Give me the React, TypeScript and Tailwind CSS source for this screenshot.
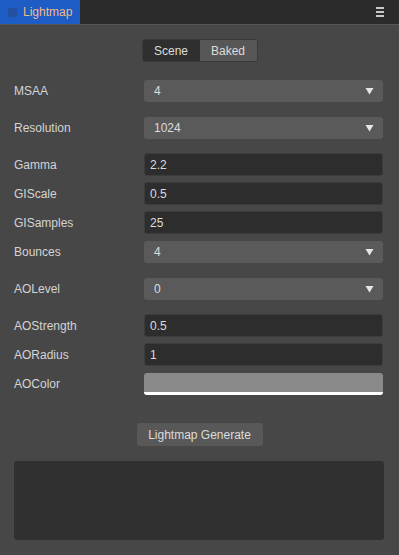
import React, { useState } from 'react';

type Row =
  | { label: string; kind: 'select'; value: string; mt: string }
  | { label: string; kind: 'input'; value: string; mt: string }
  | { label: string; kind: 'color'; value: string; mt: string };

const rows: Row[] = [
  { label: 'MSAA', kind: 'select', value: '4', mt: 'mt-[18px]' },
  { label: 'Resolution', kind: 'select', value: '1024', mt: 'mt-[15px]' },
  { label: 'Gamma', kind: 'input', value: '2.2', mt: 'mt-[14px]' },
  { label: 'GIScale', kind: 'input', value: '0.5', mt: 'mt-[6px]' },
  { label: 'GISamples', kind: 'input', value: '25', mt: 'mt-[6px]' },
  { label: 'Bounces', kind: 'select', value: '4', mt: 'mt-[7px]' },
  { label: 'AOLevel', kind: 'select', value: '0', mt: 'mt-[15px]' },
  { label: 'AOStrength', kind: 'input', value: '0.5', mt: 'mt-[14px]' },
  { label: 'AORadius', kind: 'input', value: '1', mt: 'mt-[6px]' },
  { label: 'AOColor', kind: 'color', value: '#8a8a8a', mt: 'mt-[7px]' },
];

const Arrow = () => (
  <svg width="9" height="8" viewBox="0 0 9 8" className="shrink-0">
    <path d="M0.5 1 L8.5 1 L4.5 7.5 Z" fill="#e6e6e6" />
  </svg>
);

const Field: React.FC<{ row: Row }> = ({ row }) => {
  if (row.kind === 'select') {
    return (
      <div className="flex h-[22px] w-[239px] items-center justify-between rounded-[3px] bg-[#5a5a5a] pl-[10px] pr-[9px] text-[12px] text-[#dcdcdc]">
        <span>{row.value}</span>
        <Arrow />
      </div>
    );
  }
  if (row.kind === 'input') {
    return (
      <div className="flex h-[23px] w-[239px] items-center rounded-[3px] border border-[#3c3c3c] bg-[#2d2d2d] pl-[5px] text-[12px] text-[#dcdcdc]">
        {row.value}
      </div>
    );
  }
  return (
    <div className="flex h-[22px] w-[239px] flex-col overflow-hidden rounded-[3px] bg-[#8a8a8a]">
      <div className="flex-1" />
      <div className="h-[3px] bg-white" />
    </div>
  );
};

export default function App() {
  const [mode, setMode] = useState<'scene' | 'baked'>('scene');

  return (
    <div
      className="flex h-[555px] w-[399px] flex-col bg-[#474747]"
      style={{ fontFamily: '"Liberation Sans", Arial, sans-serif' }}
    >
      {/* Header */}
      <div className="flex h-[25px] shrink-0 items-stretch justify-between border-b border-[#585858] bg-[#2b2b2b]">
        <div className="flex w-[80px] items-center gap-[6px] bg-[#1c5cc4] pl-[8px]">
          <div className="h-[9px] w-[9px] rounded-[2px] bg-[#2350a0]" />
          <span className="text-[12px] text-[#f2b88a]">Lightmap</span>
        </div>
        <div className="flex items-center pr-[15px]">
          <div className="flex w-[8px] flex-col gap-[2px]">
            <div className="h-[2px] bg-[#c8c8c8]" />
            <div className="h-[2px] bg-[#c8c8c8]" />
            <div className="h-[2px] bg-[#c8c8c8]" />
          </div>
        </div>
      </div>

      {/* Scene / Baked toggle */}
      <div className="mt-[14px] flex justify-center">
        <div className="flex h-[23px] overflow-hidden rounded-[3px] border border-[#3a3a3a] text-[12px]">
          <button
            onClick={() => setMode('scene')}
            className={`w-[57px] ${mode === 'scene' ? 'bg-[#2f2f2f]' : 'bg-[#575757]'} text-[#dcdcdc]`}
          >
            Scene
          </button>
          <button
            onClick={() => setMode('baked')}
            className={`w-[57px] ${mode === 'baked' ? 'bg-[#2f2f2f]' : 'bg-[#575757]'} text-[#dcdcdc]`}
          >
            Baked
          </button>
        </div>
      </div>

      {/* Property rows */}
      <div className="flex flex-col">
        {rows.map((row) => (
          <div key={row.label} className={`flex items-center ${row.mt}`}>
            <span className="w-[144px] shrink-0 pl-[14px] text-[12px] text-[#d4d4d4]">{row.label}</span>
            <Field row={row} />
          </div>
        ))}
      </div>

      {/* Generate */}
      <div className="mt-[28px] flex justify-center">
        <button className="h-[23px] w-[126px] rounded-[3px] bg-[#585858] text-[12px] text-[#dcdcdc]">
          Lightmap Generate
        </button>
      </div>

      {/* Output */}
      <div className="mx-[14px] mt-[15px] h-[79px] w-[370px] rounded-[3px] bg-[#303030]" />
    </div>
  );
}
